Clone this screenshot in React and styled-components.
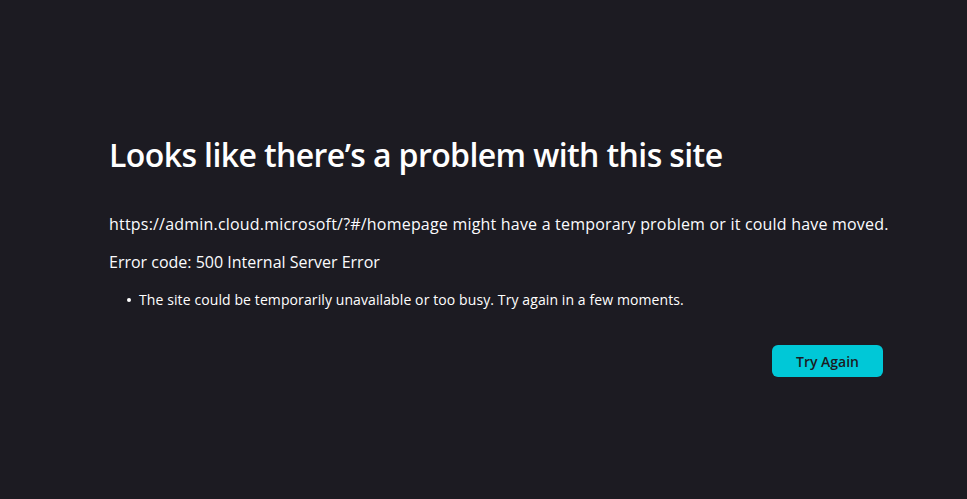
import React from "react";
import styled, { createGlobalStyle } from "styled-components";

const GlobalStyle = createGlobalStyle`
  html, body {
    margin: 0;
    padding: 0;
    background: #1c1b22;
  }
  body {
    font-family: "Open Sans", "Noto Sans", sans-serif;
    color: #fbfbfe;
  }
`;

const Page = styled.div`
  min-height: 499px;
  box-sizing: border-box;
  padding: 132px 84px 0 109px;
`;

const Card = styled.div`
  width: 774px;
  display: flex;
  flex-direction: column;
`;

const Title = styled.h1`
  margin: 0 0 34px;
  font-size: 32px;
  line-height: 46px;
  font-weight: 600;
  letter-spacing: -0.6px;
  color: #ffffff;
`;

const Text = styled.p`
  margin: 0 0 14px;
  font-size: 16px;
  line-height: 24px;
  letter-spacing: ${(p) => p.$spacing || "0px"};
  white-space: nowrap;
`;

const List = styled.ul`
  margin: 2px 0 0;
  padding-left: 18px;
  list-style: none;
`;

const Item = styled.li`
  display: flex;
  align-items: center;
  gap: 8px;
  font-size: 14px;
  line-height: 20px;
  letter-spacing: 0.1px;
  color: #ffffff;

  &::before {
    content: "";
    width: 4px;
    height: 4px;
    border-radius: 50%;
    background: #ffffff;
    flex-shrink: 0;
  }
`;

const Actions = styled.div`
  display: flex;
  justify-content: flex-end;
  margin-top: 35px;
`;

const Button = styled.button`
  width: 111px;
  height: 32px;
  border: none;
  border-radius: 6px;
  background: #00c8d7;
  color: #1c1b22;
  font-family: inherit;
  font-size: 14px;
  font-weight: 600;
  cursor: pointer;
`;

export default function App() {
  return (
    <>
      <GlobalStyle />
      <Page>
        <Card>
          <Title>Looks like there’s a problem with this site</Title>
          <Text $spacing="0.2px">
            https://admin.cloud.microsoft/?#/homepage might have a temporary
            problem or it could have moved.
          </Text>
          <Text>Error code: 500 Internal Server Error</Text>
          <List>
            <Item>
              The site could be temporarily unavailable or too busy. Try again
              in a few moments.
            </Item>
          </List>
          <Actions>
            <Button>Try Again</Button>
          </Actions>
        </Card>
      </Page>
    </>
  );
}
